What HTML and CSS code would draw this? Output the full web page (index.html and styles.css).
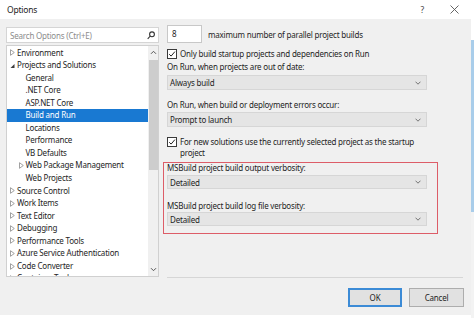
FILE: index.html
```html
<!DOCTYPE html>
<html>
<head>
<meta charset="utf-8">
<title>Options</title>
<link rel="stylesheet" href="styles.css">
</head>
<body>
<div class="screen">
  <div class="dialog">
    <div class="titlebar">
      <span class="title">Options</span>
      <div class="caption-btns">
        <span class="help">?</span>
        <svg class="close" width="9" height="9" viewBox="0 0 9 9"><path d="M0.5 0.5L8.5 8.5M8.5 0.5L0.5 8.5"/></svg>
      </div>
    </div>
    <div class="main">
      <div class="left">
        <div class="search">
          <span class="placeholder">Search Options (Ctrl+E)</span>
          <svg class="search-icon" width="8" height="9" viewBox="0 0 8 9"><circle cx="5" cy="3.3" r="2.4"/><path d="M3.3 5L0.7 7.8"/></svg>
        </div>
        <div class="tree">
          <div class="tree-list">
            <div class="row l0"><span class="exp"><svg width="5" height="7" viewBox="0 0 5 7"><path class="col" d="M0.5 0.7L4.3 3.5L0.5 6.3Z"/></svg></span>Environment</div>
            <div class="row l0"><span class="exp"><svg width="5" height="7" viewBox="0 0 5 7"><path class="opn" d="M4.5 2L4.5 6L0.5 6Z"/></svg></span>Projects and Solutions</div>
            <div class="row l1"><span class="exp"></span>General</div>
            <div class="row l1"><span class="exp"></span>.NET Core</div>
            <div class="row l1"><span class="exp"></span>ASP.NET Core</div>
            <div class="row l1 selected"><span class="exp"></span>Build and Run</div>
            <div class="row l1"><span class="exp"></span>Locations</div>
            <div class="row l1"><span class="exp"></span>Performance</div>
            <div class="row l1"><span class="exp"></span>VB Defaults</div>
            <div class="row l1"><span class="exp"><svg width="5" height="7" viewBox="0 0 5 7"><path class="col" d="M0.5 0.7L4.3 3.5L0.5 6.3Z"/></svg></span>Web Package Management</div>
            <div class="row l1"><span class="exp"></span>Web Projects</div>
            <div class="row l0"><span class="exp"><svg width="5" height="7" viewBox="0 0 5 7"><path class="col" d="M0.5 0.7L4.3 3.5L0.5 6.3Z"/></svg></span>Source Control</div>
            <div class="row l0"><span class="exp"><svg width="5" height="7" viewBox="0 0 5 7"><path class="col" d="M0.5 0.7L4.3 3.5L0.5 6.3Z"/></svg></span>Work Items</div>
            <div class="row l0"><span class="exp"><svg width="5" height="7" viewBox="0 0 5 7"><path class="col" d="M0.5 0.7L4.3 3.5L0.5 6.3Z"/></svg></span>Text Editor</div>
            <div class="row l0"><span class="exp"><svg width="5" height="7" viewBox="0 0 5 7"><path class="col" d="M0.5 0.7L4.3 3.5L0.5 6.3Z"/></svg></span>Debugging</div>
            <div class="row l0"><span class="exp"><svg width="5" height="7" viewBox="0 0 5 7"><path class="col" d="M0.5 0.7L4.3 3.5L0.5 6.3Z"/></svg></span>Performance Tools</div>
            <div class="row l0"><span class="exp"><svg width="5" height="7" viewBox="0 0 5 7"><path class="col" d="M0.5 0.7L4.3 3.5L0.5 6.3Z"/></svg></span>Azure Service Authentication</div>
            <div class="row l0"><span class="exp"><svg width="5" height="7" viewBox="0 0 5 7"><path class="col" d="M0.5 0.7L4.3 3.5L0.5 6.3Z"/></svg></span>Code Converter</div>
            <div class="row l0"><span class="exp"><svg width="5" height="7" viewBox="0 0 5 7"><path class="col" d="M0.5 0.7L4.3 3.5L0.5 6.3Z"/></svg></span>Container Tools</div>
          </div>
          <div class="scrollbar">
            <div class="sb-btn"><svg width="7" height="5" viewBox="0 0 7 5"><path d="M1 3.8L3.5 1.3L6 3.8"/></svg></div>
            <div class="sb-track"><div class="sb-thumb"></div></div>
            <div class="sb-btn"><svg width="7" height="5" viewBox="0 0 7 5"><path d="M1 1.2L3.5 3.7L6 1.2"/></svg></div>
          </div>
        </div>
      </div>
      <div class="right">
        <div class="settings">
          <div class="numrow">
            <div class="numbox">8</div>
            <span class="numlabel">maximum number of parallel project builds</span>
          </div>
          <div class="check first">
            <span class="box"><svg width="8" height="8" viewBox="0 0 8 8"><path d="M1.2 4.2L3.1 6.1L6.9 1.6"/></svg></span>
            <span>Only build startup projects and dependencies on Run</span>
          </div>
          <div class="label l-a">On Run, when projects are out of date:</div>
          <div class="select s-a"><span>Always build</span><svg width="6" height="4" viewBox="0 0 6 4"><path d="M0.5 0.7L3 3.2L5.5 0.7"/></svg></div>
          <div class="label l-b">On Run, when build or deployment errors occur:</div>
          <div class="select s-b"><span>Prompt to launch</span><svg width="6" height="4" viewBox="0 0 6 4"><path d="M0.5 0.7L3 3.2L5.5 0.7"/></svg></div>
          <div class="check second">
            <span class="box"><svg width="8" height="8" viewBox="0 0 8 8"><path d="M1.2 4.2L3.1 6.1L6.9 1.6"/></svg></span>
            <span class="wrap">For new solutions use the currently selected project as the startup project</span>
          </div>
          <div class="highlight">
            <div class="label h-a">MSBuild project build output verbosity:</div>
            <div class="select s-c"><span>Detailed</span><svg width="6" height="4" viewBox="0 0 6 4"><path d="M0.5 0.7L3 3.2L5.5 0.7"/></svg></div>
            <div class="label h-b">MSBuild project build log file verbosity:</div>
            <div class="select s-d"><span>Detailed</span><svg width="6" height="4" viewBox="0 0 6 4"><path d="M0.5 0.7L3 3.2L5.5 0.7"/></svg></div>
          </div>
        </div>
        <div class="separator"></div>
      </div>
    </div>
    <div class="footer">
      <button class="btn ok">OK</button>
      <button class="btn cancel">Cancel</button>
    </div>
  </div>
  <div class="backdrop-strip"></div>
</div>
</body>
</html>
```

FILE: styles.css
```css
* { box-sizing: border-box; }
html, body { margin: 0; padding: 0; }
body {
  width: 474px;
  height: 318px;
  overflow: hidden;
  background: #ffffff;
  font-family: "Noto Sans", "Open Sans", sans-serif;
  font-size: 8px;
  letter-spacing: -0.2px;
  color: #1e1e1e;
}
.screen {
  display: flex;
  width: 474px;
  height: 318px;
  background: #ffffff;
}
.dialog {
  width: 471px;
  height: 315px;
  background: #f0f0f0;
  display: flex;
  flex-direction: column;
}
.backdrop-strip {
  width: 3px;
  height: 318px;
  background: linear-gradient(to bottom, #ffffff 0, #ffffff 40px, #a9cdea 40px, #a9cdea 212px, #f3f3f3 212px);
}
.titlebar {
  height: 19px;
  background: #ffffff;
  display: flex;
  align-items: center;
  justify-content: space-between;
  padding-left: 7px;
  padding-right: 12px;
}
.title { font-size: 8.5px; color: #222; }
.caption-btns { display: flex; align-items: center; gap: 26px; }
.help { font-size: 8.5px; color: #444; }
.close { display: block; }
.close path { stroke: #555; stroke-width: 0.9; fill: none; }

.main {
  display: flex;
  align-items: flex-start;
  padding: 6px 0 0 6px;
}
.left {
  width: 153px;
  margin-top: 2px;
  display: flex;
  flex-direction: column;
  gap: 2px;
}
.search {
  height: 16px;
  background: #ffffff;
  border: 1px solid #d5d5d5;
  display: flex;
  align-items: center;
  justify-content: space-between;
  padding: 0 3px 0 3px;
}
.placeholder { color: #8c8c8c; }
.search-icon circle, .search-icon path { stroke: #333; stroke-width: 1.1; fill: none; }
.tree {
  height: 232px;
  background: #ffffff;
  border: 1px solid #d0d0d0;
  display: flex;
}
.tree-list {
  flex: 1;
  overflow: hidden;
  padding-top: 0.5px;
}
.row {
  height: 12.55px;
  line-height: 12.55px;
  display: flex;
  align-items: center;
  white-space: nowrap;
  color: #1e1e1e;
}
.row.l0 { padding-left: 3px; }
.row.l1 { padding-left: 11.5px; }
.row.selected { background: #1979d2; color: #ffffff; }
.exp {
  width: 7px;
  flex: none;
  display: flex;
  align-items: center;
}
.exp svg { display: block; }
.exp .col { fill: none; stroke: #8a8a8a; stroke-width: 0.8; }
.exp .opn { fill: #3c3c3c; }
.scrollbar {
  width: 10px;
  background: #f0f0f0;
  display: flex;
  flex-direction: column;
}
.sb-btn {
  height: 13px;
  display: flex;
  align-items: center;
  justify-content: center;
}
.sb-btn path { stroke: #555; stroke-width: 1; fill: none; }
.sb-track { flex: 1; padding-top: 1px; }
.sb-thumb {
  margin-left: 1px;
  width: 9px;
  height: 110px;
  background: #cdcdcd;
}

.right {
  width: 296px;
  height: 253px;
  margin-left: 8px;
  display: flex;
  flex-direction: column;
}
.settings { flex: 1; display: flex; flex-direction: column; }
.separator { height: 1px; background: #d6d6d6; }
.numrow { height: 18px; display: flex; align-items: center; }
.numbox {
  width: 35px;
  height: 18px;
  background: #ffffff;
  border: 1px solid #c8c8c8;
  padding-left: 4px;
  line-height: 16px;
}
.numlabel { margin-left: 6px; }
.check { display: flex; align-items: flex-start; line-height: 12px; }
.check.first { margin-top: 5px; }
.check.second { margin-top: 9px; line-height: 11px; }
.box {
  width: 10px;
  height: 10px;
  flex: none;
  margin-top: 1px;
  margin-right: 3px;
  background: #ffffff;
  border: 1px solid #3a3a3a;
  display: flex;
  align-items: center;
  justify-content: center;
}
.check.second .box { margin-top: 0.5px; }
.box svg { display: block; }
.box path { stroke: #222; stroke-width: 1; fill: none; }
.wrap { width: 245px; }
.label { line-height: 12px; }
.l-a { margin-top: 1px; }
.l-b { margin-top: 9px; }
.select {
  width: 260px;
  height: 15px;
  background: #e5e5e5;
  border: 1px solid #d6d6d6;
  display: flex;
  align-items: center;
  justify-content: space-between;
  padding: 0 5px 0 2px;
}
.select svg { display: block; }
.select path { stroke: #666; stroke-width: 0.9; fill: none; }
.s-a { margin-top: 2px; }
.s-b { margin-top: 1px; }
.highlight {
  margin-top: 4px;
  margin-left: -4px;
  width: 275px;
  border: 1px solid #dd5d68;
  padding: 0 10px 7px 3px;
}
.h-a { line-height: 10px; }
.s-c { margin-top: 2px; height: 14px; }
.h-b { margin-top: 11px; line-height: 11px; }
.s-d { margin-top: 1px; height: 14px; }

.footer {
  display: flex;
  justify-content: flex-end;
  gap: 7px;
  padding: 10px 7px 0 0;
}
.btn {
  height: 19px;
  background: #e1e1e1;
  border: 1px solid #adadad;
  font-family: inherit;
  font-size: 8px;
  letter-spacing: -0.2px;
  color: #1e1e1e;
  padding: 0;
  margin: 0;
}
.ok { width: 54px; border: 2px solid #3c8bd6; }
.cancel { width: 55px; }
```
